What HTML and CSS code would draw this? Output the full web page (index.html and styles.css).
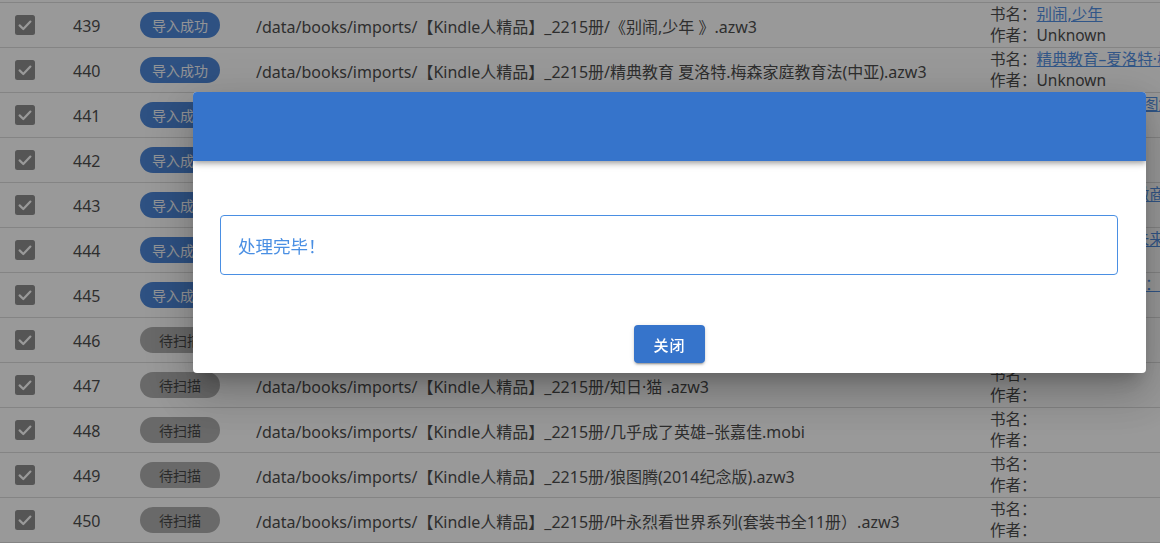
FILE: index.html
```html
<!DOCTYPE html>
<html lang="zh-CN">
<head>
<meta charset="utf-8">
<title>导入书籍</title>
<link rel="stylesheet" href="styles.css">
</head>
<body>
<div class="table">
  <div class="row">
    <div class="c-check"><svg class="cb" viewBox="0 0 20 20"><rect x="0" y="0" width="20" height="20" rx="2.5"/><path d="M4.6 10.4 L8.3 14 L15.4 6.6"/></svg></div>
    <div class="c-id">439</div>
    <div class="c-status"><span class="badge ok">导入成功</span></div>
    <div class="c-path">/data/books/imports/【Kindle人精品】_2215册/《别闹,少年 》.azw3</div>
    <div class="c-info"><div>书名：<a href="#">别闹,少年</a></div><div>作者：Unknown</div></div>
  </div>
  <div class="row">
    <div class="c-check"><svg class="cb" viewBox="0 0 20 20"><rect x="0" y="0" width="20" height="20" rx="2.5"/><path d="M4.6 10.4 L8.3 14 L15.4 6.6"/></svg></div>
    <div class="c-id">440</div>
    <div class="c-status"><span class="badge ok">导入成功</span></div>
    <div class="c-path">/data/books/imports/【Kindle人精品】_2215册/精典教育 夏洛特.梅森家庭教育法(中亚).azw3</div>
    <div class="c-info"><div>书名：<a href="#">精典教育–夏洛特·梅森家庭教育法</a></div><div>作者：Unknown</div></div>
  </div>
  <div class="row">
    <div class="c-check"><svg class="cb" viewBox="0 0 20 20"><rect x="0" y="0" width="20" height="20" rx="2.5"/><path d="M4.6 10.4 L8.3 14 L15.4 6.6"/></svg></div>
    <div class="c-id">441</div>
    <div class="c-status"><span class="badge ok">导入成功</span></div>
    <div class="c-path">/data/books/imports/【Kindle人精品】_2215册/1分钟读懂艺术(图解版).azw3</div>
    <div class="c-info"><div>书名：<a href="#">1分钟读懂艺术(图解版)</a></div><div>作者：Unknown</div></div>
  </div>
  <div class="row">
    <div class="c-check"><svg class="cb" viewBox="0 0 20 20"><rect x="0" y="0" width="20" height="20" rx="2.5"/><path d="M4.6 10.4 L8.3 14 L15.4 6.6"/></svg></div>
    <div class="c-id">442</div>
    <div class="c-status"><span class="badge ok">导入成功</span></div>
    <div class="c-path">/data/books/imports/【Kindle人精品】_2215册/白夜行.azw3</div>
    <div class="c-info"><div>书名：<a href="#">白夜行</a></div><div>作者：Unknown</div></div>
  </div>
  <div class="row">
    <div class="c-check"><svg class="cb" viewBox="0 0 20 20"><rect x="0" y="0" width="20" height="20" rx="2.5"/><path d="M4.6 10.4 L8.3 14 L15.4 6.6"/></svg></div>
    <div class="c-id">443</div>
    <div class="c-status"><span class="badge ok">导入成功</span></div>
    <div class="c-path">/data/books/imports/【Kindle人精品】_2215册/明朝那些事儿·徽商.azw3</div>
    <div class="c-info"><div>书名：<a href="#">明朝那些事儿·徽商传奇</a></div><div>作者：Unknown</div></div>
  </div>
  <div class="row">
    <div class="c-check"><svg class="cb" viewBox="0 0 20 20"><rect x="0" y="0" width="20" height="20" rx="2.5"/><path d="M4.6 10.4 L8.3 14 L15.4 6.6"/></svg></div>
    <div class="c-id">444</div>
    <div class="c-status"><span class="badge ok">导入成功</span></div>
    <div class="c-path">/data/books/imports/【Kindle人精品】_2215册/人类简史三部·未来简史.azw3</div>
    <div class="c-info"><div>书名：<a href="#">人类简史三部·未来简史</a></div><div>作者：Unknown</div></div>
  </div>
  <div class="row">
    <div class="c-check"><svg class="cb" viewBox="0 0 20 20"><rect x="0" y="0" width="20" height="20" rx="2.5"/><path d="M4.6 10.4 L8.3 14 L15.4 6.6"/></svg></div>
    <div class="c-id">445</div>
    <div class="c-status"><span class="badge ok">导入成功</span></div>
    <div class="c-path">/data/books/imports/【Kindle人精品】_2215册/看懂中国经济学.azw3</div>
    <div class="c-info"><div>书名：<a href="#">看懂中国经济学：从入门到精通</a></div><div>作者：Unknown</div></div>
  </div>
  <div class="row">
    <div class="c-check"><svg class="cb" viewBox="0 0 20 20"><rect x="0" y="0" width="20" height="20" rx="2.5"/><path d="M4.6 10.4 L8.3 14 L15.4 6.6"/></svg></div>
    <div class="c-id">446</div>
    <div class="c-status"><span class="badge wait">待扫描</span></div>
    <div class="c-path">/data/books/imports/【Kindle人精品】_2215册/局外人.azw3</div>
    <div class="c-info"><div>书名：</div><div>作者：</div></div>
  </div>
  <div class="row">
    <div class="c-check"><svg class="cb" viewBox="0 0 20 20"><rect x="0" y="0" width="20" height="20" rx="2.5"/><path d="M4.6 10.4 L8.3 14 L15.4 6.6"/></svg></div>
    <div class="c-id">447</div>
    <div class="c-status"><span class="badge wait">待扫描</span></div>
    <div class="c-path">/data/books/imports/【Kindle人精品】_2215册/知日·猫 .azw3</div>
    <div class="c-info"><div>书名：</div><div>作者：</div></div>
  </div>
  <div class="row">
    <div class="c-check"><svg class="cb" viewBox="0 0 20 20"><rect x="0" y="0" width="20" height="20" rx="2.5"/><path d="M4.6 10.4 L8.3 14 L15.4 6.6"/></svg></div>
    <div class="c-id">448</div>
    <div class="c-status"><span class="badge wait">待扫描</span></div>
    <div class="c-path">/data/books/imports/【Kindle人精品】_2215册/几乎成了英雄–张嘉佳.mobi</div>
    <div class="c-info"><div>书名：</div><div>作者：</div></div>
  </div>
  <div class="row">
    <div class="c-check"><svg class="cb" viewBox="0 0 20 20"><rect x="0" y="0" width="20" height="20" rx="2.5"/><path d="M4.6 10.4 L8.3 14 L15.4 6.6"/></svg></div>
    <div class="c-id">449</div>
    <div class="c-status"><span class="badge wait">待扫描</span></div>
    <div class="c-path">/data/books/imports/【Kindle人精品】_2215册/狼图腾(2014纪念版).azw3</div>
    <div class="c-info"><div>书名：</div><div>作者：</div></div>
  </div>
  <div class="row">
    <div class="c-check"><svg class="cb" viewBox="0 0 20 20"><rect x="0" y="0" width="20" height="20" rx="2.5"/><path d="M4.6 10.4 L8.3 14 L15.4 6.6"/></svg></div>
    <div class="c-id">450</div>
    <div class="c-status"><span class="badge wait">待扫描</span></div>
    <div class="c-path">/data/books/imports/【Kindle人精品】_2215册/叶永烈看世界系列(套装书全11册）.azw3</div>
    <div class="c-info"><div>书名：</div><div>作者：</div></div>
  </div>
</div>

<div class="overlay">
  <div class="dialog">
    <div class="dialog-head"></div>
    <div class="dialog-body">
      <div class="field">处理完毕！</div>
    </div>
    <div class="dialog-actions">
      <button class="btn">关闭</button>
    </div>
  </div>
</div>
</body>
</html>
```

FILE: styles.css
```css
html, body {
  margin: 0;
  padding: 0;
  background: #ffffff;
  overflow: hidden;
  width: 1160px;
  height: 543px;
}
body {
  font-family: "Noto Sans", "Noto Sans CJK SC", sans-serif;
  font-size: 16px;
  color: #3a3a3a;
}
.table {
  padding-top: 3px;
}
.table::before {
  content: "";
  display: block;
  height: 1px;
  margin-top: -1px;
  background: #d8d8d8;
}
.row {
  display: grid;
  grid-template-columns: 73px 67px 116px 734px 1fr;
  align-items: center;
  height: 44px;
  border-bottom: 1px solid #d8d8d8;
  white-space: nowrap;
}
.c-check {
  padding-left: 15px;
  display: flex;
  align-items: center;
}
.cb {
  width: 20px;
  height: 20px;
  display: block;
}
.cb rect { fill: #828282; }
.cb path {
  fill: none;
  stroke: #ffffff;
  stroke-width: 2.2;
  stroke-linecap: round;
  stroke-linejoin: round;
}
.c-id { color: #3a3a3a; padding-top: 1px; }
.badge {
  display: inline-flex;
  align-items: center;
  justify-content: center;
  width: 80px;
  height: 26px;
  border-radius: 13px;
  font-size: 14px;
}
.badge.ok { background: #3a7ad4; color: #f4f6fa; }
.badge.wait { background: #a6a6a6; color: #333; }
.c-path { padding-top: 1px; }
.c-info {
  font-size: 15.5px;
  line-height: 21px;
}
.c-info a {
  color: #3f84e0;
  text-decoration: underline;
}

.overlay {
  position: fixed;
  inset: 0;
  background: rgba(33, 33, 33, 0.46);
  padding: 92px 0 0 193px;
}
.dialog {
  width: 953px;
  height: 281px;
  background: #fff;
  border-radius: 4px;
  overflow: hidden;
  box-shadow: 0 11px 15px -7px rgba(0,0,0,.2), 0 24px 38px 3px rgba(0,0,0,.14), 0 9px 46px 8px rgba(0,0,0,.12);
  display: flex;
  flex-direction: column;
}
.dialog-head {
  height: 69px;
  background: #3674cb;
  box-shadow: 0 2px 4px -1px rgba(0,0,0,.2), 0 4px 5px 0 rgba(0,0,0,.14), 0 1px 10px 0 rgba(0,0,0,.12);
  position: relative;
  z-index: 1;
}
.dialog-body {
  padding: 54px 28px 0 27px;
}
.field {
  height: 58px;
  border: 1px solid #4a8fe3;
  border-radius: 4px;
  display: flex;
  align-items: center;
  padding-left: 17px;
  color: #4a8fe3;
  font-size: 17.5px;
}
.dialog-actions {
  display: flex;
  justify-content: center;
  padding-top: 50px;
}
.btn {
  width: 71px;
  height: 38px;
  border: none;
  border-radius: 4px;
  background: #3674cb;
  color: #fff;
  font-family: "Noto Sans", "Noto Sans CJK SC", sans-serif;
  font-size: 15px;
  font-weight: 500;
  letter-spacing: 1px;
  box-shadow: 0 3px 1px -2px rgba(0,0,0,.2), 0 2px 2px 0 rgba(0,0,0,.14), 0 1px 5px 0 rgba(0,0,0,.12);
}
```
